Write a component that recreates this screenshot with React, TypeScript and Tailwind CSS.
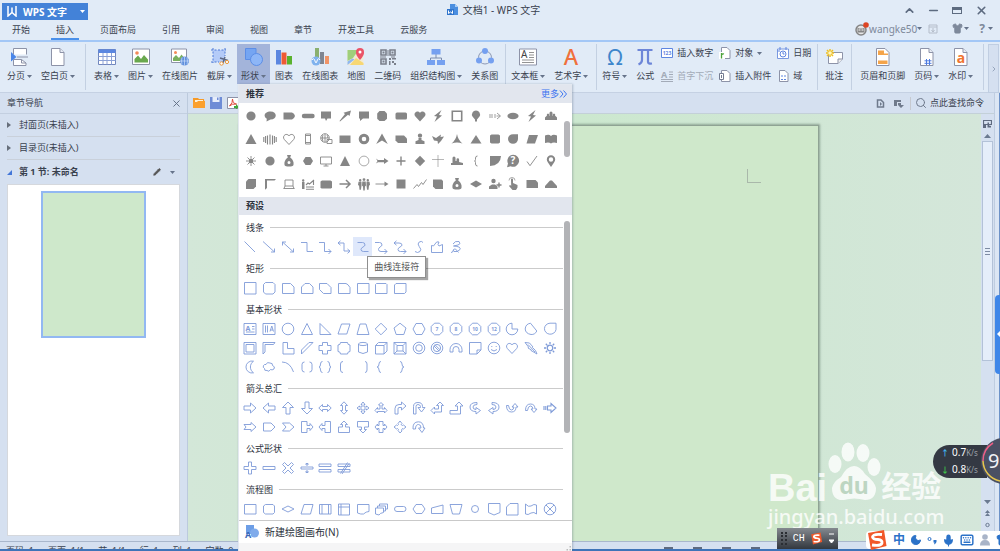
import type { ReactNode } from 'react';
import { Search, X, Minus, ChevronUp, ChevronRight, Mic, Keyboard, Moon, Shirt, Pencil } from 'lucide-react';

type Glyph = {
  name: string;
  fill?: string;
  line?: string;
  width?: number;
  text?: string;
};

const circle = (cx: number, cy: number, r: number) =>
  `M${cx - r} ${cy}a${r} ${r} 0 1 0 ${2 * r} 0a${r} ${r} 0 1 0 ${-2 * r} 0z`;

const ellipse = (cx: number, cy: number, rx: number, ry: number) =>
  `M${cx - rx} ${cy}a${rx} ${ry} 0 1 0 ${2 * rx} 0a${rx} ${ry} 0 1 0 ${-2 * rx} 0z`;

const heart = 'M7 12.500L2.400 7.600C-.4 4.400 4 .2 7 3.800C10 .2 14.400 4.400 11.600 7.600z';
const bolt = 'M10.500 1L3 7L6 7.500L3.500 13L11 6.500L8 6z';
const people =
  'M3 6.500a1.200 1.200 0 1 1 2 0L5.500 7V4a1.500 1.500 0 1 1 3 0v3l.5-.5a1.200 1.200 0 1 1 2 0L13 8.500V11H1V8.500z';
const bag = 'M5 1h4L8.200 3.500C11 5.500 12 8 11.500 11C11 13 3 13 2.500 11C2 8 3 5.500 5.800 3.500z';

const recommended: Glyph[] = [
  { name: '椭圆', fill: circle(7, 7, 4.6) },
  { name: '椭圆标注', fill: 'M7.500 2.500C14.500 2.500 14.500 10.500 7.500 10.500L3.500 12.500L3.800 9.800C-.5 7 2 2.500 7.500 2.500z' },
  { name: '五边形', fill: 'M1.500 3.500h8.500a5 5 0 0 1 3 3.500a5 5 0 0 1-3 3.500H1.500z' },
  { name: '终止', fill: 'M3 4.800h8.500a2.200 2.200 0 0 1 0 4.400H3a2.200 2.200 0 0 1 0-4.400z' },
  { name: '矩形标注', fill: 'M2 2.500h10v7H8.500L7 12L6 9.500H2z' },
  { name: '上升箭头', fill: 'M13 1.500L11.500 7L10 5.800L2 12.500L1.500 12L7 5L5.500 3.800z' },
  { name: '对话框', fill: 'M2 2.500h10v7H6L3 12V9.500H2z' },
  { name: '八边形', fill: 'M4.500 2h5L12 4.500v5.200L9.500 12h-5L2.200 9.700V4.500z' },
  { name: '圆角矩形', fill: 'M3 3.500h8.500q1.500 0 1.500 1.500v4q0 1.500-1.500 1.500H3Q1.500 10.500 1.500 9V5Q1.500 3.500 3 3.500z' },
  { name: '心形', fill: heart },
  { name: '闪电', fill: bolt },
  { name: '图框', line: 'M2.300 2.300h9.400v9.400H2.300z', width: 1.6 },
  { name: '气球', fill: 'M7 1.500a4 4 0 0 1 3.500 6L8 10.500v2H6v-2L3.500 7.500a4 4 0 0 1 3.500-6z' },
  { name: '虚线箭头', line: 'M1 6h4M6 6h2M1 8h4M6 8h2M9 4l3.500 3L9 10M8.500 7H12', width: 0.8 },
  { name: '扁椭圆', fill: ellipse(7, 7, 5.6, 3.2) },
  { name: '闪电形', fill: bolt },
  { name: '人群', fill: people },

  { name: '三角形', fill: 'M7 2L12.500 12h-11z' },
  { name: '队列', line: 'M.8 5v5M2.600 4v7M4.500 3.500v9M7 2.500v10M9.500 3.500v9M11.400 4v7M13.200 5v5', width: 1.1 },
  { name: '空心心形', line: heart },
  { name: '手机', line: 'M4.500 2h5v10h-5zM4.500 3.500h5M4.500 10.500h5' },
  { name: '网络', line: circle(6, 6, 4.3) + 'M2 6h8M6 2v8M4 3q-1.500 3 0 6.500M8 3q1 2 .8 3M8 7.500h5v4H8z' },
  { name: '矩形', fill: 'M1.500 3.500h11v7.500h-11z' },
  { name: '圆环', line: circle(7, 7, 3.8), width: 3 },
  { name: '燕尾箭头', fill: 'M7 1.500L12.800 12L7 8.500L1.200 12z' },
  { name: '折角矩形', fill: 'M1.500 3.500h8.500l3 3V11H4l-2.500-2.500z' },
  { name: '用户', fill: circle(7, 3.6, 2.2) + 'M5.500 6h3v2l3 1.200V12h-9V9.200l3-1.200z' },
  { name: '飞鸟', fill: 'M1 4l4 2l5-3.500l-.5 2.500L13 4.500L10 9l-3 3l-.5-3L3 8.500z' },
  { name: '尖角', fill: 'M7 2Q8 8 12.500 11.500Q7 9.500 1.500 11.500Q6 8 7 2z' },
  { name: '等腰三角形', fill: 'M7 3l5.500 8.500h-11z' },
  { name: '圆角正方形', fill: 'M3.500 2.500h7l1.500 1v7l-1.500 1h-7l-1.500-1v-7z' },
  { name: '泪滴形', fill: 'M7 2.200h5V7a5 4.800 0 1 1-5-4.800z' },
  { name: '平行四边形', fill: 'M4 3h9l-3 8.500H1.500z' },
  { name: '书本', fill: 'M1 3.500Q5 2 7 4Q9 2 13 3.500V11Q9 10 7 11.500Q5 10 1 11z' },

  { name: '太阳', fill: circle(7, 7, 2.5), line: 'M7 2v2M7 10v2M2 7h2M10 7h2M3.500 3.500L5 5M9 9l1.500 1.500M3.500 10.500L5 9M9 5l1.500-1.500' },
  { name: '圆形', fill: circle(7, 7, 4.6) },
  { name: '钱袋', fill: bag + circle(7, 8.5, 1.5) },
  { name: '六边形', fill: 'M4.500 3h5L12 7l-2.500 4h-5L2 7z' },
  { name: '显示器', line: 'M1.500 3h11v7h-11zM4.500 12h5M7 10v2' },
  { name: '锐角三角形', fill: 'M7 2l5 10H2z' },
  { name: '虚线圆', line: circle(7, 7, 4.9), width: 0.7 },
  { name: '燕尾右箭头', fill: 'M1 4.500l2 1.500h6V4l4.500 3L9 10V8.200H3L1 9.500L2.500 7z' },
  { name: '加号', line: 'M7 2.500v9M2.500 7h9', width: 1.4 },
  { name: '菱形', fill: 'M7 1.800L12.200 7L7 12.200L1.800 7z' },
  { name: '十字', line: 'M7 1v12M1 5.500h12', width: 0.6 },
  { name: '团队', fill: 'M2.500 9V4a1.500 1.500 0 1 1 3 0v3h1V5.500a1.300 1.300 0 1 1 2.600 0V8L13 9v2H1V9z' },
  { name: '左大括号', line: 'M8.500 2Q6.500 2 6.500 4v1.500Q6.500 7 5.500 7Q6.500 7 6.500 8.500V10q0 2 2 2' },
  { name: '扇形', fill: 'M2 2h11q-.5 9.500-11 10z' },
  { name: '问号', fill: 'M7.200 .8a6 6 0 1 1-2.500 11.500L1 13.200L2 9.500A6 6 0 0 1 7.200 .8z', text: '?' },
  { name: '对勾', line: 'M2 7.500l3 4.200L12 2' },
  { name: '定位', line: circle(7, 5.5, 3.2), width: 2, fill: 'M3.800 8.200h6.400L7 13z' },

  { name: '立方体', fill: 'M4.500 2H12v7.500L9.500 12H2V4.500z' },
  { name: '半闭框', fill: 'M2 2h11l-1.500 1.500H4V11l-2 1.800z' },
  { name: '笔记本', line: 'M3 3h8v6H3zM1.500 11.500h11M3 9l-1 2.500M11 9l1 2.500' },
  { name: '演示', fill: circle(2.2, 3.5, 1.2) + 'M1 5h2.500v7H1z', line: 'M5 8l2-2l1.500 1L13 3M5 10h8M5 12.200h8M12.500 3v5', width: 1.1 },
  { name: '圆角横矩形', fill: 'M3 3.500h8.500l1.500 1v6l-1 1H2.500l-1-1v-6z' },
  { name: '右箭头线', line: 'M1.500 7h10M8 3l4 4l-4 4', width: 1.5 },
  { name: '三人', fill: circle(7, 2.6, 1.4) + circle(3.2, 3.2, 1.2) + circle(10.8, 3.2, 1.2) + 'M5.300 4.500h3.400l.3 4l-1 1l-.3 4H6.300L6 9.500l-1-1zM1.500 4.800h3v4l-.6 4H2.500l-.4-4L1 8zM9.500 4.800h3l.5 3l-1 1l-.5 4h-1.400l-.6-4z' },
  { name: '细箭头', line: 'M.5 7h10', fill: 'M9.500 4.500l4 2.500l-4 2.500z' },
  { name: '正方形', fill: 'M2.500 2.500h9v9h-9z' },
  { name: '折线图', line: 'M.5 11.500L4 7.500L5.500 9.500L8.500 5.500L10 7.500L13.500 2.500' },
  { name: '折角', fill: 'M2 2.500h8.500L12 4v8H4.500L2 9.500z' },
  { name: '美元钱袋', fill: bag + circle(7, 8.5, 1.5) },
  { name: '扁菱形', fill: 'M7 3.500L13 7l-6 3.500L1 7z' },
  { name: '添加用户', fill: circle(5.5, 4, 2.2) + 'M1 12V9.500L4 7.500h3l2.500 2V12z', line: 'M11 5.500v5M8.500 8h5', width: 1.4 },
  { name: '手势', fill: 'M5 2.500a1 1 0 0 1 2 0V6l4.500 2v2.500L10 13H6.500L3 9l1-1l1.200.8z', line: 'M3 3.500a3 3 0 0 1 6 0', width: 0.7 },
  { name: '剪角矩形', fill: 'M1.500 3h9L13 5.500V11H1.500z' },
  { name: '梯形', fill: 'M6 3.500h2l5 5.500v2H1V9z' },
];

const lines: Glyph[] = [
  { name: '直线', line: 'M1.500 1.500L12 12' },
  { name: '箭头', line: 'M1 1.500L12.500 12M12.500 8.500V12H9' },
  { name: '双箭头', line: 'M1.500 2L12.500 12M12.500 8.500V12H9M1.500 5.500V2H5' },
  { name: '肘形连接符', line: 'M1 2.500h6v9h6' },
  { name: '肘形箭头连接符', line: 'M1 2.500h5.500v9H13M10.500 9l2.500 2.500L10.500 14' },
  { name: '肘形双箭头连接符', line: 'M1 3h6v8h6M3.500 .8L1 3l2.500 2.200M10.500 9l2.500 2.200l-2.500 2.200' },
  { name: '曲线连接符', line: 'M1.500 2.500h5Q9 2.500 9 5Q9 6 7 7Q5 8 5 9.500q0 2 2.500 2h5' },
  { name: '曲线箭头连接符', line: 'M1 2.500h4.500Q8 2.500 8 5Q8 6 6 7Q4.500 8 4.500 9.500q0 2 2.500 2h6M10.500 9l2.500 2.500L10.500 14' },
  { name: '曲线双箭头连接符', line: 'M1 3h5Q9 3 9 5Q9 6 7 7Q5 8 5 9.500q0 2 2.500 2H13M3.500 .8L1 3l2.500 2.200M10.500 9l2.500 2.500L10.500 14' },
  { name: '曲线', line: 'M11 2.500Q9.500 .5 7.200 2Q5 3.800 7.200 6.500Q10 9.500 8 11.500Q5.500 13.500 3 11.500' },
  { name: '任意多边形', line: 'M1.500 12.500v-7Q4 7 5 4Q6.500 .8 9 2Q7 5 9 6L12.500 4.500v8z' },
  { name: '自由曲线', line: 'M4 4Q6 .5 10 1.500Q12.500 4 9 5L4.500 6Q12.500 6.500 11 9.500Q8.500 12.500 5 11.500Q3.500 9 6.500 9L9.500 12.500M2 12.500Q4 13 4.500 9.500' },
];

const rectangles: Glyph[] = [
  { name: '矩形', line: 'M1.500 1.500h11.500v11.500H1.500z' },
  { name: '圆角矩形', line: 'M3.500 1.500h7.500l2 2v7.500l-2 2H3.500l-2-2V3.500z' },
  { name: '剪去单角的矩形', line: 'M1.500 2.500h8l3.500 3.500v6.500H1.500z' },
  { name: '剪去同侧角的矩形', line: 'M1.500 12.500V6L5 2.500h4.500L13 6v6.500z' },
  { name: '剪去对角的矩形', line: 'M1.500 2.500h7.500l4 4v6H5.500l-4-4z' },
  { name: '单圆角矩形', line: 'M1.500 2.500h7.500q2 .5 4 4v6H1.500z' },
  { name: '同侧圆角矩形', line: 'M1.500 2.500h11.500v10H1.500z' },
  { name: '圆顶角矩形', line: 'M2.500 2.500h9.500l1 1v9H1.500v-9z' },
  { name: '对角圆角矩形', line: 'M3 2.500h10v8.500l-1.500 1.500h-10V4z' },
];

const ngon = 'M4.500 1.200h5L12.800 4.500v5L9.500 12.800h-5L1.200 9.500v-5z';

const basic: Glyph[] = [
  { name: '文本框', line: 'M1 1.500h12v11H1zM9 4.500h2.500M9 7h2.500M3 10h8.500', text: 'A' },
  { name: '竖排文本框', line: 'M1 1.500h12v11H1zM3.500 3.500v7M5.500 3.500v7M8 9.500L9.800 4L11.500 9.500M8.500 8h2.500' },
  { name: '椭圆', line: circle(7, 7, 5.8) },
  { name: '等腰三角形', line: 'M7 1.500L12.500 12.500h-11z' },
  { name: '直角三角形', line: 'M2 1.500v11h11z' },
  { name: '平行四边形', line: 'M4.500 2H13L9.800 12H1z' },
  { name: '梯形', line: 'M4 2h6l3 10.500H1z' },
  { name: '菱形', line: 'M7 1.200L12.800 7L7 12.800L1.200 7z' },
  { name: '五边形', line: 'M7 1.200L13 6L10.800 12.500H3.200L1 6z' },
  { name: '六边形', line: 'M4 1.500h6L13 7l-3 5.500H4L1 7z' },
  { name: '七边形', line: ngon, text: '7' },
  { name: '八边形', line: ngon, text: '8' },
  { name: '十边形', line: ngon, text: '10' },
  { name: '十二边形', line: ngon, text: '12' },
  { name: '饼形', line: 'M7 1.200V7h5.800A5.800 5.800 0 1 1 7 1.200z' },
  { name: '弦形', line: 'M6.500 1.200L12.800 9Q11 12.800 7 12.500Q1.500 11.500 1.200 7Q1.500 2 6.500 1.200z' },
  { name: '泪滴形', line: 'M13 1.200V7.500A5.800 5.500 0 1 1 7 1.200z' },

  { name: '图文框', line: 'M1 1.500h12v11.500H1zM3 3.500h8v7.500H3z' },
  { name: '半闭框', line: 'M1 1.500h12l-1.500 2H3v7.500l-2 2z' },
  { name: 'L形', line: 'M2 1.500h4.500v6h6.500v5.500H2z' },
  { name: '斜纹', line: 'M9 1.500H13L1.500 13V9z' },
  { name: '十字形', line: 'M4.500 1.500h5v3H13v5H9.500v3.500h-5V9.500H1v-5h3.500z' },
  { name: '缺角矩形', line: 'M3.500 1.500h7Q10.500 4 13 4v6.500q-2.500 0-2.500 2.500h-7Q3.500 10.500 1 10.500V4Q3.500 4 3.500 1.500z' },
  { name: '圆柱形', line: 'M2.500 3v8q4.500 3 9 0V3' + ellipse(7, 3, 4.5, 1.6) },
  { name: '立方体', line: 'M1.500 4.500h8.500v8.500H1.500zM1.500 4.500l3-3H13v8.500l-3 3M10 4.500l3-3' },
  { name: '棱台', line: 'M1 1.500h12v11.500H1zM4 4.500h6v5.500H4zM1 1.500l3 3M13 1.500l-3 3M1 13l3-3M13 13l-3-3' },
  { name: '同心圆', line: circle(7, 7, 5.8) + circle(7, 7, 3.3) },
  { name: '禁止符', line: circle(7, 7, 5.8) + circle(7, 7, 3.6) + 'M4 5l5 5M5 3.800l5 5' },
  { name: '空心弧', line: 'M1 11V8.500a6 6 0 0 1 12 0V11H10V8.500a3 3 0 0 0-6 0V11z' },
  { name: '折角形', line: 'M1.500 1.500h11.500v7.500l-4 4H1.500zM9 13V9h4' },
  { name: '笑脸', line: circle(7, 7, 5.8) + 'M4.800 5v1M9.200 5v1M4 8.500q3 3 6 0' },
  { name: '心形', line: heart },
  { name: '闪电形', line: 'M1 1.500L5.500 2L9 6L8.500 6.500L11.500 9.500L13 13L7 9.500L7.500 9L4 7L4.500 6zM4 3.500l7 7.500' },
  { name: '太阳形', line: circle(7, 7, 2.8) + 'M7 1v2M7 11v2M1 7h2M11 7h2M2.800 2.800l1.400 1.400M9.800 9.800l1.400 1.400M2.800 11.200l1.400-1.400M9.800 4.200l1.400-1.400', width: 1.3 },

  { name: '新月形', line: 'M10.500 1.200A6 6 0 1 0 10.500 12.800A7 7 0 0 1 10.500 1.200z' },
  { name: '云形', line: 'M4 4.500Q5 1.500 8 3Q11 3 10.500 5.500Q13.500 6.500 12 9Q10 10.500 8.500 9.500Q7 12.500 5 10.500Q2 11 2.500 8.500Q.5 7.500 1.500 5.500Q2.500 4 4 4.500z' },
  { name: '弧形', line: 'M1 2Q9 2 12.500 12' },
  { name: '双括号', line: 'M4.500 2Q2 2 2 4.500v5Q2 12 4.500 12M9.500 2Q12 2 12 4.500v5q0 2.500-2.500 2.500' },
  { name: '双大括号', line: 'M4.500 1.500Q2.500 1.500 2.500 4Q2.500 7 1 7Q2.500 7 2.500 10q0 2.500 2 2.500M9.500 1.500Q11.500 1.500 11.500 4Q11.500 7 13 7Q11.500 7 11.500 10q0 2.500-2 2.500' },
  { name: '左中括号', line: 'M6 1.500Q3.500 1.500 3.500 4v6q0 2.500 2.500 2.500' },
  { name: '右中括号', line: 'M9 1.500q2 0 2 2.500v6q0 2.500-2 2.500' },
  { name: '左大括号', line: 'M7 1.500Q5 1.500 5 4Q5 7 3 7Q5 7 5 10q0 2.500 2 2.500' },
  { name: '右大括号', line: 'M7 1.500q2 0 2 2.500Q9 7 11 7Q9 7 9 10q0 2.500-2 2.500' },
];

const arrows: Glyph[] = [
  { name: '右箭头', line: 'M1 5h6.500V2L13 7l-5.500 5V9H1z' },
  { name: '左箭头', line: 'M13 5H6.500V2L1 7l5.500 5V9H13z' },
  { name: '上箭头', line: 'M5 13V6.500H1.500L7 1l5.500 5.500H9V13z' },
  { name: '下箭头', line: 'M5 1v6.500H1.500L7 13l5.500-5.500H9V1z' },
  { name: '左右箭头', line: 'M.8 7L4.500 3.500V5.500h5V3.500L13.200 7L9.500 10.500V8.500h-5V10.500z' },
  { name: '上下箭头', line: 'M7 .8L10.500 4.500H8.500v5h2L7 13.200L3.500 9.500H5.500v-5H3.500z' },
  { name: '十字箭头', line: 'M7 1l2 2.500H8v2.500h2.500V5L13 7l-2.500 2V8H8v2.500h1L7 13l-2-2.500H6V8H3.500v1L1 7l2.500-2V6H6V3.500H5z' },
  { name: '丁字箭头', line: 'M7 1.500l2.500 2.500H8V8h2.500V6.500L13 9.500l-2.500 2.500V10.500h-7V12L1 9.500L3.500 6.500V8H6V4H4.500z' },
  { name: '圆角右箭头', line: 'M2 13V7.500Q2 3.500 6 3.500H8.500V1L13 5L8.500 9V6.500H6Q5 6.500 5 8v5z' },
  { name: '手杖形箭头', line: 'M1.500 13V5.500Q1.500 1.500 6 1.500Q10.500 1.500 10.500 5.500v1h2.500L9.500 11L6 6.500h2.500V5.500Q8 3.500 6 3.500Q4 3.500 4 5.500V13z' },
  { name: '直角双向箭头', line: 'M1 9.500L4.500 6v2h4V4.500h-2L10 1l3.500 3.500h-2V11h-7v2z' },
  { name: '直角上箭头', line: 'M1 9.500h7.500V5H6L10 1l4 4h-2.500v8H1z' },
  { name: '左弧形箭头', line: 'M9 1.500Q2 1.500 2 6Q2 10.500 8 10.500V13L12.500 9.500L8 6.500V8.500Q5 8.500 5 6Q5 3.500 9 3.500z' },
  { name: '右弧形箭头', line: 'M5 1.500Q12 1.500 12 6Q12 10.500 6 10.500V13L1.500 9.500L6 6.500V8.500Q9 8.500 9 6Q9 3.500 5 3.500z' },
  { name: '下弧形箭头', line: 'M1.500 4.500Q1.500 11 6.500 11Q11 11 11 6H13L10 2.500L7 6H9Q8.500 9 6.500 9Q4 9 3.500 4.500z' },
  { name: '上弧形箭头', line: 'M1.500 9.500Q1.500 3 6.500 3Q11 3 11 8H13L10 11.500L7 8H9Q8.500 5 6.500 5Q4 5 3.500 9.500z' },
  { name: '虚尾箭头', line: 'M1 5v4M2.800 5v4M4.500 5H8V2.500L13 7L8 11.500V9H4.500z', width: 1.1 },
  { name: '燕尾形箭头', line: 'M1 4.500h7V2.500L13 7L8 11.500V9.500H1L3 7z' },
  { name: '五边形箭头', line: 'M1.500 3h7.500l4 4l-4 4H1.500z' },
  { name: 'V形', line: 'M1.500 3h7l4.500 4l-4.500 4h-7L5 7z' },
  { name: '右箭头标注', line: 'M1.500 1.500H7v4h3V3.500L13 7l-3 3.500V8.500H7v4H1.500z' },
  { name: '左箭头标注', line: 'M12.500 1.500H7v4H4V3.500L1 7l3 3.500V8.500h3v4h5.500z' },
  { name: '上箭头标注', line: 'M1.500 12.500V7H5.500V4.500H3.500L7 1l3.500 3.500H8.500V7h4v5.500z' },
  { name: '下箭头标注', line: 'M1.500 1.500V7H5.500V9.500H3.500L7 13l3.500-3.500H8.500V7h4V1.500z' },
  { name: '左右箭头标注', line: 'M5 1.500h4v4h1.500V4L13 7l-2.500 3V8.500H9v4H5v-4H3.500V10L1 7l2.500-3v1.500H5z' },
  { name: '十字箭头标注', line: 'M7 1l2 2.500l-1 1l1.500 1l1-.5L13 7l-2.500 2l-1-.5L8.500 10l.5 1L7 13l-2-2.500l.5-1L4.500 8.500l-1 .5L1 7l2.500-2l1 .5L5.500 4.500L5 3.500z' },
  { name: '环形箭头', line: 'M1 9Q.5 1.800 6.500 1.800Q11.500 2 11.500 8H13L10 12.500L6.500 8H9Q9 4.500 6.500 4.500Q3.500 4.500 3.500 9z' },
];

const formulas: Glyph[] = [
  { name: '加号', line: 'M5.500 1h3v4.500H13v3H8.500V13h-3V8.500H1v-3h4.500z' },
  { name: '减号', line: 'M1 5.500h12v3H1z' },
  { name: '乘号', line: 'M3.500 1.500L7 5l3.500-3.500l2 2L9 7l3.500 3.500l-2 2L7 9l-3.500 3.500l-2-2L5 7L1.500 3.500z' },
  { name: '除号', line: 'M1 6h12v2H1zM6 2.500h2v1.500H6zM6 10h2v1.500H6z' },
  { name: '等号', line: 'M1 3h12v2.500H1zM1 8.500h12V11H1z' },
  { name: '不等号', line: 'M1 3h12v2.500H1zM1 8.500h12V11H1zM10.500 1.500L3.500 12.500M12 2.500L5 13' },
];

const flowchart: Glyph[] = [
  { name: '过程', line: 'M1.500 2.500H13v9.500H1.500z' },
  { name: '可选过程', line: 'M3.500 2.500h7.500l1.500 1.500v6.500L11 12H3.500L1.500 10.500V4z' },
  { name: '决策', line: 'M7 4l6 3l-6 3l-6-3z' },
  { name: '数据', line: 'M4 2.500h9L10.500 12H1z' },
  { name: '预定义过程', line: 'M1.500 2.500h11.500v9.500H1.500zM4 2.500V12M10.500 2.500V12' },
  { name: '内部贮存', line: 'M1.500 2h11v11h-11zM4 2v11M1.500 5h11' },
  { name: '文档', line: 'M1.500 2.500h11.500V9.500Q10 9.500 7.500 12Q5 12.500 1.500 11z' },
  { name: '多文档', line: 'M1.500 6h8v4.500Q6 11 5 13L1.500 12zM3.500 6V4h8v5H9.500M5.500 4V2h8v5H11.500' },
  { name: '终止', line: 'M4 4.500h6.500a2.500 2.500 0 0 1 0 5H4a2.500 2.500 0 0 1 0-5z' },
  { name: '准备', line: 'M4 2.500h6l3 4.500l-3 4.500H4L1 7z' },
  { name: '手动输入', line: 'M1.500 6L13 3v8.500H1.500z' },
  { name: '手动操作', line: 'M1 2.500h12L10.500 12h-7z' },
  { name: '联系', line: circle(7, 7, 3.5) },
  { name: '离页连接符', line: 'M1.500 1.500H13v9L7 13l-5.500-2.500z' },
  { name: '卡片', line: 'M5 1.500h8v11.500H1.500V5z' },
  { name: '资料带', line: 'M1.500 2Q4.500 5.500 7 4Q10 1.500 12.500 3v9Q10 9.500 7 11Q4 13.500 1.500 12z' },
  { name: '汇总连接', line: circle(7, 7, 5.8) + 'M3 3l8 8M11 3l-8 8' },
];

const sections = [
  { title: '线条', shapes: lines },
  { title: '矩形', shapes: rectangles },
  { title: '基本形状', shapes: basic },
  { title: '箭头总汇', shapes: arrows },
  { title: '公式形状', shapes: formulas },
  { title: '流程图', shapes: flowchart },
];

function ShapeGlyph({ shape, solid }: { shape: Glyph; solid?: boolean }) {
  const boxed = shape.name === '文本框';
  return (
    <svg viewBox="0 0 14 14" className={`size-[14px] ${solid ? 'text-[#868686]' : 'text-[#7f9bd8]'}`}>
      {shape.fill && <path d={shape.fill} fill="currentColor" fillRule="evenodd" />}
      {shape.line && <path d={shape.line} fill="none" stroke="currentColor" strokeWidth={shape.width ?? 0.9} />}
      {shape.text && (
        <text
          x={boxed ? 5 : 7}
          y={solid ? 10 : 8.8}
          textAnchor="middle"
          fontSize={solid ? 10 : boxed ? 7 : 5}
          fontWeight="bold"
          fill={solid ? '#fff' : 'currentColor'}
        >
          {shape.text}
        </text>
      )}
    </svg>
  );
}

function Caret({ className = 'text-[#66738a]' }: { className?: string }) {
  return (
    <svg viewBox="0 0 5 3" className={`w-[5px] h-[3px] shrink-0 ${className}`}>
      <path d="M0 0h5L2.500 3z" fill="currentColor" />
    </svg>
  );
}

function Svg({ children }: { children: ReactNode }) {
  return (
    <svg viewBox="0 0 18 18" className="size-[18px] shrink-0 overflow-visible">
      {children}
    </svg>
  );
}

const sheet = 'M2.500 .5H11l4 4v13H2.500z';
const fold = 'M11 .5v4h4';

const icons = {
  pageBreak: (
    <Svg>
      <path d="M2.500 6.500V.5h13v6M2.500 17.500v-6h8l4.500 3.500v2.500z" fill="#fff" stroke="#8d93a8" />
      <path d="M10.500 11.500v3.500H15" fill="none" stroke="#8d93a8" />
      <path d="M0 4l5.500 5L0 13.500z" fill="#4a86e8" />
      <path d="M6 9h11" stroke="#8d93a8" />
    </Svg>
  ),
  blank: (
    <Svg>
      <path d={sheet} fill="#fff" stroke="#8d93a8" />
      <path d={fold} fill="#e9edf5" stroke="#8d93a8" />
    </Svg>
  ),
  table: (
    <Svg>
      <path d="M.5 1.500h17v15H.5z" fill="#fff" stroke="#7186bd" />
      <path d="M.5 1.500h17v3.500H.5z" fill="#5b87e0" />
      <path d="M.5 8.500h17M.5 12.500h17M5 5v11.500M9 5v11.500M13.500 5v11.500" stroke="#8ba1d6" />
    </Svg>
  ),
  picture: (
    <Svg>
      <path d="M.5 1h17v15.500H.5z" fill="#fff" stroke="#8d93a8" />
      <circle cx="5" cy="5" r="1.800" fill="#f38a5a" />
      <path d="M2.500 14.500V11L6 7.500L9 11l3-4l4 4.500v3z" fill="#69a84e" />
    </Svg>
  ),
  onlinePicture: (
    <Svg>
      <path d="M.5 1h15v13.500H.5z" fill="#fff" stroke="#8d93a8" />
      <circle cx="4.500" cy="4.500" r="1.500" fill="#f38a5a" />
      <path d="M2 13v-3l3-3l3 3l2.500-3.500L14 11v2z" fill="#7ab060" />
      <circle cx="13.500" cy="13" r="4.500" fill="#5f8fdc" />
      <path d="M9 13h9M13.500 8.500v9M11 9.500q-1 3.500 0 7M16 9.500q1 3.500 0 7" fill="none" stroke="#cfe0fa" strokeWidth=".7" />
    </Svg>
  ),
  screenshot: (
    <Svg>
      <path d="M2 2h12v12H2z" fill="#b4cbf8" />
      <path d="M2 0v15M0 2h15M14 0v8M0 14h8" fill="none" stroke="#4b79d8" strokeDasharray="2 1.500" />
      <path d="M9 10l8 2.500M14 9l-2.500 7" stroke="#5f6b85" strokeWidth="1.500" />
      <circle cx="10.500" cy="15.500" r="1.700" fill="#fff" stroke="#e8963a" />
      <circle cx="16" cy="14" r="1.600" fill="#fff" stroke="#e8963a" />
    </Svg>
  ),
  shapes: (
    <Svg>
      <path d="M.5 .5h10.500v11H.5z" fill="#75a5f2" stroke="#5c8ee6" />
      <circle cx="11.500" cy="11.500" r="6" fill="#8db6f7" stroke="#5c8ee6" />
    </Svg>
  ),
  chart: (
    <Svg>
      <path d="M1 2h5v14.500H1z" fill="#5b87e0" />
      <path d="M6.500 4.500h5v12h-5z" fill="#ee5a35" />
      <path d="M12 8h5v8.500h-5z" fill="#5ab22e" />
    </Svg>
  ),
  onlineChart: (
    <Svg>
      <path d="M4 0h4v10H4z" fill="#8ab06f" />
      <path d="M9 4h4v12H9z" fill="#7f8591" />
      <path d="M14 8h4v8h-4z" fill="#f09468" />
      <circle cx="5" cy="13" r="4.500" fill="#7fb2ee" />
      <path d="M1 12q2-3 3 1t2 0t3-1" fill="none" stroke="#fff" />
    </Svg>
  ),
  map: (
    <Svg>
      <path d="M.5 2h16v15H.5z" fill="#f2ead6" />
      <path d="M.5 2h11L6 10L.5 13z" fill="#9fcf7b" />
      <path d="M3 17l6-7l7.500 5v2z" fill="#f7d774" />
      <path d="M.5 17V13.500l5-3l2 1z" fill="#8fb8f0" />
      <path d="M13 12Q8.500 7 9 4a4 4 0 0 1 8 0Q17.500 7 13 12z" fill="#ea5468" />
      <circle cx="13" cy="4" r="1.500" fill="#fff" />
    </Svg>
  ),
  qr: (
    <Svg>
      <path d="M2 2h5v5H2zM11 2h5v5h-5zM2 11h5v5H2z" fill="none" stroke="#7a7f8a" strokeWidth="1.600" />
      <path d="M3.500 3.500h2v2h-2zM12.500 3.500h2v2h-2zM3.500 12.500h2v2h-2zM10 10h2v2h-2zM13 10h4v1.500h-4zM10 13h1.500v4H10zM13 13h2v2h-2zM15 15h2v2h-2zM8.500 2h1v6h-1zM1 8.500h6v1H1zM12 8.500h4v1h-4z" fill="#7a7f8a" />
    </Svg>
  ),
  org: (
    <Svg>
      <path d="M9 6v4M3.500 13V10h11v3" fill="none" stroke="#7a8cae" />
      <path d="M4.500 1h9v5.500h-9zM0 12h8v5H0zM10 12h8v5h-8z" fill="#75a0f0" />
    </Svg>
  ),
  relation: (
    <Svg>
      <circle cx="9" cy="9.500" r="6.500" fill="none" stroke="#8d99b5" />
      <circle cx="9" cy="3" r="3" fill="#75a0f0" />
      <circle cx="3" cy="12.500" r="3" fill="#75a0f0" />
      <circle cx="15" cy="12.500" r="3" fill="#75a0f0" />
    </Svg>
  ),
  textBox: (
    <Svg>
      <path d="M.5 1h17v16H.5z" fill="#fff" stroke="#8d93a8" />
      <text x="2" y="10" fontSize="10" fill="#444">A</text>
      <path d="M10 4.500h5M10 7h5M10 9.500h5M3 12h12M3 14.500h12" stroke="#777" strokeWidth=".8" />
    </Svg>
  ),
  wordArt: (
    <Svg>
      <text x="9" y="17" fontSize="22" fontWeight="500" textAnchor="middle" fill="#f0703c">A</text>
    </Svg>
  ),
  omega: (
    <Svg>
      <text x="9" y="16.500" fontSize="21" textAnchor="middle" fill="#3d86cc">Ω</text>
    </Svg>
  ),
  pi: (
    <Svg>
      <path d="M1.500 2h15M6 2v10q0 3-3.500 4.500M12 2v12q0 2 4 1.500" fill="none" stroke="#6d86d8" strokeWidth="2.200" />
    </Svg>
  ),
  note: (
    <Svg>
      <path d="M3.500 4.500h14V11l-4.500 4.500H3.500z" fill="#fff" stroke="#8d93a8" />
      <path d="M13 15.500V11h4.500" fill="#eee" stroke="#8d93a8" />
      <path d="M5 1v8M1 5h8M2 2l6 6M8 2L2 8" stroke="#f0c020" strokeWidth="1.500" />
      <circle cx="5" cy="5" r="1.800" fill="#fff6c0" />
    </Svg>
  ),
  headerFooter: (
    <Svg>
      <path d={sheet} fill="#fff" stroke="#8d93a8" />
      <path d="M4 2.500h6v3h4V7H4zM4 12.500h9.500V16H4z" fill="#f4a44a" />
    </Svg>
  ),
  pageNumber: (
    <Svg>
      <path d={sheet} fill="#fff" stroke="#8d93a8" />
      <path d={fold} fill="#e9edf5" stroke="#8d93a8" />
      <path d="M8.500 11v6M11.500 11v6M6.500 12.800h7M6.500 15.300h7" stroke="#4d7be0" />
    </Svg>
  ),
  watermark: (
    <Svg>
      <path d={sheet} fill="#fff" stroke="#8d93a8" />
      <path d={fold} fill="#e9edf5" stroke="#8d93a8" />
      <text x="9" y="15" fontSize="14" fontWeight="bold" textAnchor="middle" fill="#ee7430">a</text>
    </Svg>
  ),
};

type RibbonItem = { label: string; icon: ReactNode; menu?: boolean };

const pages: RibbonItem[] = [
  { label: '分页', icon: icons.pageBreak, menu: true },
  { label: '空白页', icon: icons.blank, menu: true },
];
const media: RibbonItem[] = [
  { label: '表格', icon: icons.table, menu: true },
  { label: '图片', icon: icons.picture, menu: true },
  { label: '在线图片', icon: icons.onlinePicture },
  { label: '截屏', icon: icons.screenshot, menu: true },
];
const diagrams: RibbonItem[] = [
  { label: '图表', icon: icons.chart },
  { label: '在线图表', icon: icons.onlineChart },
  { label: '地图', icon: icons.map },
  { label: '二维码', icon: icons.qr },
  { label: '组织结构图', icon: icons.org, menu: true },
  { label: '关系图', icon: icons.relation },
];
const texts: RibbonItem[] = [
  { label: '文本框', icon: icons.textBox, menu: true },
  { label: '艺术字', icon: icons.wordArt, menu: true },
];
const symbols: RibbonItem[] = [
  { label: '符号', icon: icons.omega, menu: true },
  { label: '公式', icon: icons.pi },
];
const layouts: RibbonItem[] = [
  { label: '页眉和页脚', icon: icons.headerFooter },
  { label: '页码', icon: icons.pageNumber, menu: true },
  { label: '水印', icon: icons.watermark, menu: true },
];

function RibbonButton({ item, active }: { item: RibbonItem; active?: boolean }) {
  return (
    <button
      type="button"
      className={`flex flex-col items-center gap-[4px] h-[40px] pt-[4px] px-[4px] whitespace-nowrap ${
        active ? 'bg-[#a3b4da]' : ''
      }`}
    >
      {item.icon}
      <span className="flex items-center gap-[2px] leading-[12px]">
        {item.label}
        {item.menu && <Caret />}
      </span>
    </button>
  );
}

function RibbonButtons({ items }: { items: RibbonItem[] }) {
  return (
    <>
      {items.map((item) => (
        <RibbonButton key={item.label} item={item} />
      ))}
    </>
  );
}

function Separator() {
  return <div className="w-px h-[46px] shrink-0 bg-[#c3d0e2]" />;
}

function SmallButton({ label, menu, disabled, children }: { label: string; menu?: boolean; disabled?: boolean; children: ReactNode }) {
  return (
    <button
      type="button"
      disabled={disabled}
      className={`flex items-center gap-[4px] h-[18px] whitespace-nowrap ${disabled ? 'text-[#a3abb8]' : ''}`}
    >
      <svg viewBox="0 0 12 12" className="size-[12px] overflow-visible">
        {children}
      </svg>
      {label}
      {menu && <Caret />}
    </button>
  );
}

function SmallButtons() {
  const page = 'M2.500 .5H8l3 3v8H2.500z';
  return (
    <div className="grid grid-cols-[auto_auto_auto] gap-x-[6px] gap-y-[5px]">
      <SmallButton label="插入数字">
        <path d="M.5 1.500h11v9H.5z" fill="#fff" stroke="#5f86e0" />
        <text x="6" y="8" fontSize="5" fontWeight="bold" textAnchor="middle" fill="#5f86e0">123</text>
      </SmallButton>
      <SmallButton label="对象" menu>
        <path d={page} fill="#fff" stroke="#8d93a8" />
        <path d="M0 5h6v7H0z" fill="#fff" />
        <path d="M2.500 6v5.500M2.500 8Q3.500 6.500 5 7" fill="none" stroke="#4ba33a" strokeWidth="1.300" />
      </SmallButton>
      <SmallButton label="日期">
        <path d="M.5 2h11v9.500H.5z" fill="#fff" stroke="#7a99e0" />
        <path d="M3 0v3M9 0v3M.5 4H3" stroke="#5f86e0" />
        <circle cx="6" cy="7" r="3" fill="#fff" stroke="#5f86e0" />
        <path d="M6 5v2h1.500" fill="none" stroke="#5f86e0" />
      </SmallButton>
      <SmallButton label="首字下沉" disabled>
        <text x="0" y="8" fontSize="9" fontWeight="bold" fill="#a3abb8">A</text>
        <path d="M8 2h4M8 4.500h4M8 7h4M0 9.500h12M0 11.500h12" stroke="#a3abb8" />
      </SmallButton>
      <SmallButton label="插入附件">
        <path d={page} fill="#fff" stroke="#8d93a8" />
        <path d="M.5 3.500h4v6h-4zM2.500 5v3" fill="#fff" stroke="#757d92" />
      </SmallButton>
      <SmallButton label="域">
        <path d={page} fill="#fff" stroke="#8d93a8" />
        <path d="M4 6h5M4 9.500h5" stroke="#5f86e0" strokeDasharray="2 1" />
      </SmallButton>
    </div>
  );
}

function ShapesMenu() {
  return (
    <div className="absolute z-20 left-px top-full w-[334px] flex flex-col bg-white border-l border-t border-[#e3e8f0] shadow-[1px_0_2px_rgba(80,100,120,0.35)] text-[#2c323c]">
      <div className="flex items-center justify-between h-[18px] shrink-0 pl-[7px] pr-[5px] bg-[#e2e6ee]">
        <h2 className="font-bold">推荐</h2>
        <a href="#more" className="flex items-center text-[#3d75f0]">
          更多
          <svg viewBox="0 0 8 8" className="size-[8px]">
            <path d="M1 .5L4 4L1 7.500M4.500 .5L7.500 4L4.500 7.500" fill="none" stroke="currentColor" />
          </svg>
        </a>
      </div>
      <div className="flex justify-between pl-[3px] pr-[2px] pt-[2px] pb-[2px]">
        <div className="grid grid-cols-[repeat(17,minmax(0,1fr))] grid-rows-4 w-[318px] h-[90px]">
          {recommended.map((shape) => (
            <button key={shape.name} type="button" aria-label={shape.name} className="flex items-center justify-center">
              <ShapeGlyph shape={shape} solid />
            </button>
          ))}
        </div>
        <div className="w-[6px] h-[36px] mt-[16px] rounded-full bg-[#b6b6ba]" />
      </div>
      <h2 className="flex items-center h-[18px] shrink-0 pl-[7px] font-bold bg-[#e2e6ee]">预设</h2>
      <div className="flex justify-between h-[305px] pl-[2px] pr-[2px]">
        <div className="pt-[3px]">
          {sections.map(({ title, shapes }) => (
            <section key={title} className="mb-[3px] last:mb-0">
              <h3 className="flex items-center gap-[6px] h-[19px] pl-[5px] leading-[12px] whitespace-nowrap">
                {title}
                <span className="flex-1 h-px -mr-[4px] bg-[#cbcbcb]" />
              </h3>
              <div className="grid grid-cols-[repeat(17,minmax(0,1fr))] w-[318px]">
                {shapes.map((shape) => {
                  const hovered = shape.name === '曲线连接符';
                  return (
                    <button
                      key={shape.name}
                      type="button"
                      aria-label={shape.name}
                      className={`relative flex items-center justify-center h-[19px] ${hovered ? 'bg-[#dfe8fb]' : ''}`}
                    >
                      <ShapeGlyph shape={shape} />
                      {hovered && (
                        <span
                          role="tooltip"
                          className="absolute z-10 top-full left-[14px] px-[6px] py-[3px] bg-white border border-[#8f8f8f] shadow-[2px_2px_1px_rgba(0,0,0,0.35)] leading-[14px] whitespace-nowrap text-[#555]"
                        >
                          {shape.name}
                        </span>
                      )}
                    </button>
                  );
                })}
              </div>
            </section>
          ))}
        </div>
        <div className="w-[6px] h-[212px] mt-[6px] rounded-full bg-[#b2b3b6]" />
      </div>
      <button type="button" className="flex items-center gap-[6px] h-[23px] shrink-0 pl-[6px] border-t border-[#c9c9c9] text-[10px]">
        <svg viewBox="0 0 14 14" className="size-[14px] overflow-visible">
          <path d="M1 0h8v9H1z" fill="#6d9ee6" />
          <circle cx="9.500" cy="8" r="4.500" fill="#7fabeb" />
          <path d="M0 9h6v5H0z" fill="#fff" />
          <text x="0" y="13" fontSize="9" fontWeight="bold" fill="#3a68b8">A</text>
        </svg>
        新建绘图画布(N)
      </button>
      <div className="flex items-end justify-end h-[8px] shrink-0 bg-[#f5f5f6]">
        <svg viewBox="0 0 6 6" className="size-[6px]">
          <path d="M3.500 1h1.500v1.500H3.500zM.5 4H2v1.500H.5zM3.500 4h1.500v1.500H3.500z" fill="#bbb" />
        </svg>
      </div>
    </div>
  );
}

const tabs = ['开始', '插入', '页面布局', '引用', '审阅', '视图', '章节', '开发工具', '云服务'];

function TitleBar() {
  return (
    <header className="shrink-0 bg-[#e1ebf7] border-b-2 border-[#a3c7f6]">
      <div className="grid grid-cols-[1fr_auto_1fr] items-center h-[20px] pl-[2px] pr-[7px] pb-[2px]">
        <button type="button" className="flex items-center w-[86px] h-[17px] mt-[3px] pl-[5px] bg-[#4382d8] text-white text-[10px] font-bold">
          <svg viewBox="0 0 10 11" className="w-[10px] h-[11px] mr-[6px]">
            <path d="M1 0v10L5 6.500L9 10V0M5 1.500v5" fill="none" stroke="#fff" strokeWidth="1.500" />
          </svg>
          WPS 文字
          <span className="ml-auto mr-[3px]">
            <Caret className="text-white" />
          </span>
        </button>
        <h1 className="flex items-center gap-[4px] pr-[8px] text-[10px] whitespace-nowrap">
          <svg viewBox="0 0 12 12" className="size-[12px]">
            <path d="M3 0h5l3 3v8H3z" fill="#4a8ee0" />
            <path d="M8 0v3h3z" fill="#a9cdf5" />
            <path d="M0 5h7v6H0z" fill="#2f74cc" />
            <path d="M1.500 6.500v3L3.500 8l2 1.500v-3" fill="none" stroke="#fff" />
          </svg>
          文档1 - WPS 文字
        </h1>
        <div className="flex justify-end text-[#5d6b80]">
          <button type="button" aria-label="折叠" className="flex justify-center w-[24px]"><ChevronUp size={13} strokeWidth={3} /></button>
          <button type="button" aria-label="最小化" className="flex justify-center w-[24px]"><Minus size={13} strokeWidth={3} /></button>
          <button type="button" aria-label="最大化" className="flex items-center justify-center w-[24px]">
            <span className="w-[10px] h-[7px] border border-t-3 border-[#5d6b80]" />
          </button>
          <button type="button" aria-label="关闭" className="flex justify-center w-[24px]"><X size={13} strokeWidth={3} /></button>
        </div>
      </div>
      <div className="flex items-stretch justify-between h-[20px] pl-[7px] pr-[7px]">
        <nav className="flex gap-[16px]">
          {tabs.map((tab) => (
            <a
              key={tab}
              href="#tab"
              className={`flex items-center px-[5px] pt-[2px] border-b-2 whitespace-nowrap ${
                tab === '插入' ? 'border-[#4a90ea]' : 'border-transparent'
              }`}
            >
              {tab}
            </a>
          ))}
        </nav>
        <div className="flex items-center pb-[3px] text-[#7e899b]">
          <svg viewBox="0 0 14 14" className="size-[14px]">
            <circle cx="6" cy="8" r="5" fill="#e6e6e6" stroke="#858585" strokeWidth="1.500" />
            <path d="M2.500 5.500L4 6.500h4l1.500-1v5h-7z" fill="#858585" />
            <path d="M3.500 8h2M6.500 8h2" stroke="#fff" />
            <circle cx="11" cy="3" r="2.800" fill="#dd4422" />
          </svg>
          <button type="button" className="flex items-center text-[10px]">wangke50<Caret /></button>
          <svg viewBox="0 0 10 10" className="size-[10px] ml-[6px] mr-[14px]">
            <path d="M1 1h8v8H1zM1 3h8M5 4v4M3.500 6L5 8l1.500-2" fill="none" stroke="#b5bdca" />
          </svg>
          <button type="button" aria-label="皮肤" className="flex items-center gap-px mr-[10px]"><Shirt size={11} fill="#7e899b" /><Caret /></button>
          <button type="button" className="flex items-center gap-[3px] text-[12px] font-bold">?<Caret /></button>
        </div>
      </div>
    </header>
  );
}

function Ribbon() {
  return (
    <div className="relative z-20 flex items-start h-[51px] shrink-0 pt-[2px] bg-[#e1ebf7] border-b border-[#c5d1e3]">
      <div className="flex gap-px pl-[3px] pr-[6px]"><RibbonButtons items={pages} /></div>
      <Separator />
      <div className="flex gap-px pl-[4px] pr-[3px]">
        <RibbonButtons items={media} />
        <div className="relative">
          <RibbonButton item={{ label: '形状', icon: icons.shapes, menu: true }} active />
          <ShapesMenu />
        </div>
        <RibbonButtons items={diagrams} />
      </div>
      <Separator />
      <div className="flex gap-px pl-px pr-[4px]"><RibbonButtons items={texts} /></div>
      <Separator />
      <div className="flex gap-px pl-px pr-[6px]">
        <RibbonButtons items={symbols} />
        <div className="pl-[2px]"><SmallButtons /></div>
      </div>
      <Separator />
      <div className="flex pl-[3px] pr-[4px]"><RibbonButtons items={[{ label: '批注', icon: icons.note }]} /></div>
      <Separator />
      <div className="flex gap-px pl-[4px] pr-[6px]"><RibbonButtons items={layouts} /></div>
      <Separator />
      <button type="button" aria-label="更多命令" className="flex items-center justify-center w-[11px] h-[49px] ml-auto mr-px border border-[#c0cee2] bg-[#d5e0f0] text-[#7788a3]">
        <ChevronRight size={8} />
      </button>
    </div>
  );
}

function ChapterPanel() {
  return (
    <aside className="flex flex-col w-[188px] shrink-0 border-r border-[#bccadd] bg-[#d5e0f0]">
      <div className="flex items-center justify-between h-[21px] shrink-0 pl-[7px] pr-[5px] border-b border-[#c3cfe0]">
        <h2>章节导航</h2>
        <button type="button" aria-label="关闭导航"><X size={11} className="text-[#5d6b80]" /></button>
      </div>
      <div className="flex flex-col flex-1 px-[7px] pb-[5px]">
        {['封面页(未插入)', '目录页(未插入)'].map((title) => (
          <button key={title} type="button" className="flex items-center gap-[8px] h-[23px] border-b border-[#c9d0da]">
            <svg viewBox="0 0 4 6" className="w-[4px] h-[6px]"><path d="M0 0l4 3L0 6z" fill="#666e7a" /></svg>
            {title}
          </button>
        ))}
        <div className="flex items-center h-[24px]">
          <svg viewBox="0 0 5 5" className="size-[5px] mr-[7px]"><path d="M5 0v5H0z" fill="#4276d8" /></svg>
          <span className="font-bold">第 1 节: 未命名</span>
          <Pencil size={8} fill="#555" className="ml-auto mr-[9px] text-[#555]" />
          <span className="mr-[5px]"><Caret /></span>
        </div>
        <div className="flex-1 pt-[6px] bg-white border border-[#d5d8dd]">
          <div className="w-[105px] h-[147px] mx-auto border-2 border-[#92b8f2] bg-[#cee8cb]" />
        </div>
      </div>
    </aside>
  );
}

function QuickBar() {
  return (
    <div className="flex items-center h-[21px] shrink-0 pl-[5px] pr-[6px] bg-[#d5e0f0] border-b border-[#c3d0d8]">
      <div className="flex gap-[5px]">
        <button type="button" aria-label="打开">
          <svg viewBox="0 0 12 12" className="size-[12px]">
            <path d="M0 1h5l1 1h5l1 9H0z" fill="#f69a28" />
            <path d="M2 3h8v3H2z" fill="#fff1d8" />
            <path d="M0 5h4l1-1h7v7H0z" fill="#fba02e" />
          </svg>
        </button>
        <button type="button" aria-label="保存">
          <svg viewBox="0 0 12 12" className="size-[12px]">
            <path d="M0 0h12v12H0z" fill="#6e8cd6" />
            <path d="M2.500 0h7v5h-7z" fill="#e6edfb" />
            <path d="M7 .5h1.500v2.500H7z" fill="#6e8cd6" />
          </svg>
        </button>
        <button type="button" aria-label="输出为PDF">
          <svg viewBox="0 0 12 12" className="size-[12px]">
            <path d="M.5 .5h11v11H.5z" fill="#fff" stroke="#8d93a8" />
            <path d="M2.500 9Q6 6 5.500 2Q6 7 9.500 7Q5 6.500 2.500 9z" fill="none" stroke="#e0483a" />
            <path d="M7 9h2V7l3 3l-3 2.500V11H7z" fill="#42a83a" />
          </svg>
        </button>
      </div>
      <div className="flex items-center ml-auto text-[#6f7a8c]">
        <svg viewBox="0 0 9 9" className="size-[9px] mr-[9px]">
          <path d="M1.500 1H5l2.500 2.500V8h-6z" fill="none" stroke="currentColor" strokeWidth="1.500" />
          <path d="M4 3v4l2-2z" fill="currentColor" />
        </svg>
        <svg viewBox="0 0 10 9" className="w-[10px] h-[9px] mr-[6px]">
          <path d="M0 1h7v2H3v4H0zM4 4h3v2h3L7 9L4 6z" fill="currentColor" />
        </svg>
        <label className="flex items-center h-[13px] pl-[4px] gap-[3px] border-l border-[#c6c9cf]">
          <Search size={12} />
          <input
            aria-label="查找命令"
            placeholder="点此查找命令"
            className="w-[58px] bg-transparent placeholder:text-[#39414e] outline-none"
          />
        </label>
      </div>
    </div>
  );
}

function ScrollRail() {
  return (
    <div className="flex flex-col items-center w-[13px] shrink-0 pt-[6px] pb-[13px] bg-[#d5e0f0] text-[#6b7a91]">
      <svg viewBox="0 0 9 9" className="size-[9px] shrink-0">
        <path d="M.5 .5h8v4h-8z" fill="none" stroke="#5f6b80" strokeWidth="1.200" />
        <path d="M0 4h3v4H0zM4.500 2.500v5H8V6L6 5.500v-3z" fill="#5f6b80" />
      </svg>
      <svg viewBox="0 0 7 4" className="w-[7px] h-[4px] mt-[5px] mb-[3px] shrink-0"><path d="M0 4l3.500-4L7 4z" fill="currentColor" /></svg>
      <div className="flex flex-col items-center justify-center gap-[2px] w-[11px] h-[220px] border border-[#b3c2d8] bg-[#e5eefa]">
        <span className="w-[5px] h-px bg-[#7d8ba3]" />
        <span className="w-[5px] h-px bg-[#7d8ba3]" />
        <span className="w-[5px] h-px bg-[#7d8ba3]" />
      </div>
      <svg viewBox="0 0 7 28" className="w-[7px] h-[28px] mt-auto shrink-0">
        <path d="M0 0h7L3.500 4zM1 13l2.500-3L6 13zM1 16l2.500-3L6 16z" fill="currentColor" />
        <circle cx="3.500" cy="25" r="1.700" fill="none" stroke="currentColor" />
      </svg>
    </div>
  );
}

function Watermark() {
  return (
    <div className="absolute left-[768px] top-[441px] w-[180px] text-white opacity-80 font-bold select-none">
      <div className="flex items-baseline h-[60px]">
        <span className="text-[38px] leading-[38px] font-[Liberation_Sans,sans-serif]">Bai</span>
        <svg viewBox="0 0 54 60" className="w-[54px] h-[60px] shrink-0">
          <ellipse cx="8" cy="23" rx="6.500" ry="9" fill="#fff" />
          <ellipse cx="21" cy="11" rx="6.500" ry="9.500" fill="#fff" />
          <ellipse cx="36" cy="12" rx="6.500" ry="9" fill="#fff" />
          <ellipse cx="47" cy="26" rx="6.500" ry="9" fill="#fff" />
          <path d="M27 25Q33 25 38 33Q48 41 49 47Q49 59 38 59Q27 56 17 59Q5 60 5 47Q6 41 14 36Q20 25 27 25z" fill="#fff" />
          <text x="27" y="53" fontSize="23" textAnchor="middle" fill="#b9d2bd">du</text>
        </svg>
        <span className="self-end text-[30px] leading-[30px] whitespace-nowrap">经验</span>
      </div>
      <div className="mt-[4px] text-[20px] leading-[24px] font-medium">jingyan.baidu.com</div>
    </div>
  );
}

function SpeedWidget() {
  return (
    <div className="absolute z-30 right-0 top-[438px] flex items-center h-[46px] overflow-hidden">
      <div className="flex flex-col justify-around w-[54px] h-[33px] pl-[8px] rounded-l-full bg-[#343943] text-[10px] leading-[13px] text-white">
        <span className="whitespace-nowrap"><b className="mr-[3px] text-[8px] text-[#42b3ee]">↑</b>0.7<span className="text-[8px] text-[#9aa0a8]">K/s</span></span>
        <span className="whitespace-nowrap"><b className="mr-[3px] text-[8px] text-[#3cc24a]">↓</b>0.8<span className="text-[8px] text-[#9aa0a8]">K/s</span></span>
      </div>
      <svg viewBox="0 0 20 46" className="w-[20px] h-[46px] -ml-[7px]">
        <circle cx="24" cy="23" r="23" fill="#4a5063" />
        <path d="M13 5A21 21 0 0 0 3 23" fill="none" stroke="#ec5f86" strokeWidth="1.500" />
        <path d="M3 23A21 21 0 0 0 20 43" fill="none" stroke="#e8c64e" strokeWidth="1.500" />
        <text x="8" y="30" fontSize="20" fill="#f0f2f6">9</text>
      </svg>
    </div>
  );
}

function SogouLogo({ className }: { className: string }) {
  return (
    <svg viewBox="0 0 22 22" className={className}>
      <path d="M2 4L18 1l2.500 16L5 21z" fill="#f1582a" />
      <path d="M16 5.500Q7 4.500 6.500 8Q7 10.500 12 10.500Q16.500 11 16 14Q15 17.500 6 16" fill="none" stroke="#fff" strokeWidth="2.800" />
    </svg>
  );
}

function InputBars() {
  return (
    <>
      <div className="absolute z-30 left-[777px] bottom-[2px] flex items-center justify-between w-[61px] h-[21px] px-[4px] bg-linear-to-b from-[#858a90] to-[#33383f] text-white font-[Liberation_Mono,monospace] text-[10px]">
        <span className="w-[6px] h-[13px] border-x-2 border-dotted border-[#2b2e33]" />
        CH
        <SogouLogo className="size-[13px]" />
        <svg viewBox="0 0 5 11" className="w-[5px] h-[11px]">
          <path d="M0 1h5M0 7h5L2.500 10z" fill="#fff" stroke="#fff" />
        </svg>
      </div>
      <div className="absolute z-30 right-0 bottom-[2px] flex items-center gap-[5px] w-[134px] h-[18px] bg-white rounded-l-sm text-[#2b72c8]">
        <SogouLogo className="size-[22px] shrink-0" />
        <b className="text-[12px]">中</b>
        <Moon size={12} fill="currentColor" className="shrink-0" />
        <svg viewBox="0 0 10 10" className="size-[10px] shrink-0">
          <circle cx="2.500" cy="4" r="1.500" fill="none" stroke="currentColor" />
          <path d="M6.500 5h3q.5 3-2.500 4.500l.5-2h-1z" fill="currentColor" />
        </svg>
        <Mic size={13} fill="currentColor" className="shrink-0" />
        <Keyboard size={14} strokeWidth={2.5} className="shrink-0" />
        <svg viewBox="0 0 12 12" className="size-[12px] shrink-0">
          <circle cx="6" cy="3" r="2.800" fill="#a9b4c8" />
          <path d="M1 11.500Q1 6 6 6t5 5.500z" fill="#a9b4c8" />
        </svg>
        <span className="w-[5px] overflow-hidden"><Shirt size={12} fill="currentColor" /></span>
      </div>
    </>
  );
}

export default function App() {
  return (
    <div className="relative flex flex-col h-screen overflow-hidden bg-[#d5e0f0] font-[Noto_Sans,Noto_Sans_CJK_SC,sans-serif] text-[9px] leading-[12px] text-[#39414e]">
      <TitleBar />
      <Ribbon />
      <main className="flex flex-1 min-h-0">
        <ChapterPanel />
        <div className="flex flex-col flex-1 min-w-0">
          <QuickBar />
          <div className="flex flex-1 min-h-0">
            <div className="flex flex-1 min-w-0 pt-[11px] pr-[162px] pl-[50px] bg-linear-to-r from-[#d3e7d8] via-[#cce8cf] to-[#d4e6da]">
              <div className="flex-1 pt-[43px] pr-[57px] bg-[#cfe8cb] border-t border-r border-[#8fa394] shadow-[1px_-1px_2px_rgba(80,100,90,0.5)]">
                <div className="w-[14px] h-[14px] ml-auto border-l border-b border-[#a9b8aa]" />
              </div>
            </div>
            <ScrollRail />
          </div>
        </div>
        <div className="flex items-center w-[6px] shrink-0 bg-[#dce6f4] border-l border-r border-l-[#bfcde0] border-r-[#6d92c8]">
          <button type="button" aria-label="展开任务窗格" className="flex items-center justify-center w-[6px] h-[79px] mt-[34px] -mr-[2px] rounded-l-sm bg-[#3f86e8]">
            <svg viewBox="0 0 3 6" className="w-[3px] h-[6px]"><path d="M3 0v6L0 3z" fill="#fff" /></svg>
          </button>
        </div>
      </main>
      <footer className="flex items-start gap-[14px] h-[8px] shrink-0 pl-[6px] pt-[3px] overflow-hidden border-t border-[#a9b7cc] bg-[#d5e0f0] whitespace-nowrap">
        <span>页码: 1</span>
        <span>页面: 1/1</span>
        <span>节: 1/1</span>
        <span>行: 1</span>
        <span>列: 1</span>
        <span>字数: 0</span>
        <span className="flex gap-[20px] ml-auto mr-[240px]">
          {['全屏', '页面', '大纲', 'Web'].map((view) => (
            <button key={view} type="button" aria-label={view} className="w-[9px] h-[8px] mt-[2px] border-2 border-[#5f6b80]" />
          ))}
        </span>
      </footer>
      <div className="h-[2px] shrink-0 bg-[#3f74b8]" />
      <Watermark />
      <SpeedWidget />
      <InputBars />
    </div>
  );
}
